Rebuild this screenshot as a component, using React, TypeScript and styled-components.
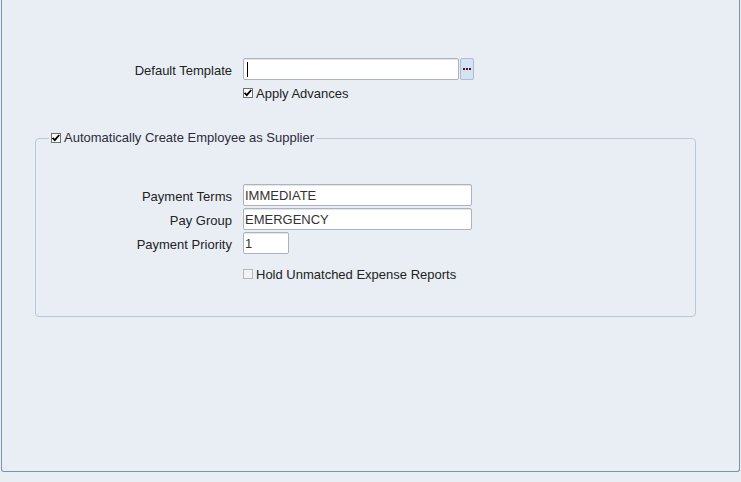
import React from 'react';
import styled, { createGlobalStyle } from 'styled-components';

const GlobalStyle = createGlobalStyle`
    html, body {
        margin: 0;
        padding: 0;
        background: #e9eef5;
        font-family: 'Liberation Sans', Arial, sans-serif;
    }
`;

export default function App() {
    return (
        <>
            <GlobalStyle />
            <PanelDiv>
                <FormGrid labelWidth={230}>
                    <Label>Default Template</Label>
                    <LovField>
                        <TextInput width={216}>
                            <Caret />
                        </TextInput>
                        <LovButton title="Search">
                            <svg width="8" height="2" viewBox="0 0 8 2">
                                <rect x="0" y="0" width="2" height="2" fill="#5c0f12" />
                                <rect x="3" y="0" width="2" height="2" fill="#5c0f12" />
                                <rect x="6" y="0" width="2" height="2" fill="#5c0f12" />
                            </svg>
                        </LovButton>
                    </LovField>
                    <span />
                    <CheckRow>
                        <CheckBox checked />
                        Apply Advances
                    </CheckRow>
                </FormGrid>

                <Group>
                    <Legend>
                        <CheckBox checked />
                        Automatically Create Employee as Supplier
                    </Legend>

                    <FormGrid labelWidth={196}>
                        <Label>Payment Terms</Label>
                        <TextInput width={229}>IMMEDIATE</TextInput>
                        <Label>Pay Group</Label>
                        <TextInput width={229}>EMERGENCY</TextInput>
                        <Label>Payment Priority</Label>
                        <TextInput width={46}>1</TextInput>
                        <span />
                        <CheckRow spaced>
                            <CheckBox disabled />
                            Hold Unmatched Expense Reports
                        </CheckRow>
                    </FormGrid>
                </Group>
            </PanelDiv>
        </>
    );
}

function CheckBox({ checked, disabled }: { checked?: boolean; disabled?: boolean }) {
    return (
        <CheckBoxSpan disabled={disabled}>
            {checked && (
                <svg width="8" height="8" viewBox="0 0 8 8">
                    <path d="M0.6 3.8 L2.8 6.2 L7.2 1" fill="none" stroke="#000" strokeWidth="1.8" />
                </svg>
            )}
        </CheckBoxSpan>
    );
}

const PanelDiv = styled.div`
    box-sizing: border-box;
    width: 739px;
    height: 472px;
    margin-left: 1px;
    padding: 58px 0 0 0;
    border: 1px solid #7d92ab;
    border-top: none;
    border-radius: 0 0 3px 3px;
    background: #e9eef5;
`;

const FormGrid = styled.div<{ labelWidth: number }>`
    display: grid;
    grid-template-columns: ${(p) => p.labelWidth}px 1fr;
    column-gap: 11px;
    row-gap: 2px;
    align-items: center;
`;

const Label = styled.label`
    box-sizing: border-box;
    height: 22px;
    padding-top: 2px;
    text-align: right;
    font-size: 13px;
    color: #222;
    line-height: 22px;
    white-space: nowrap;
`;

const TextInput = styled.div<{ width: number }>`
    box-sizing: border-box;
    display: flex;
    align-items: center;
    width: ${(p) => p.width}px;
    height: 22px;
    padding: 0 1px;
    border: 1px solid #aab3bf;
    border-radius: 2px;
    background: #fff;
    box-shadow: inset 0 1px 0 #e3e7ec;
    font-size: 13px;
    color: #333;
    white-space: nowrap;
`;

const Caret = styled.span`
    display: block;
    width: 1px;
    height: 15px;
    margin-left: 2px;
    background: #000;
`;

const LovField = styled.div`
    display: flex;
    gap: 1px;
`;

const LovButton = styled.div`
    box-sizing: border-box;
    display: flex;
    align-items: center;
    justify-content: center;
    width: 14px;
    height: 22px;
    border: 1px solid #a9bdd5;
    border-radius: 2px;
    background: #d5e2f1;
`;

const CheckRow = styled.div<{ spaced?: boolean }>`
    display: flex;
    align-items: center;
    gap: 3px;
    height: 18px;
    margin-top: ${(p) => (p.spaced ? 9 : 2)}px;
    font-size: 13px;
    color: #222;
    white-space: nowrap;
`;

const CheckBoxSpan = styled.span<{ disabled?: boolean }>`
    box-sizing: border-box;
    display: inline-flex;
    align-items: center;
    justify-content: center;
    width: 10px;
    height: 10px;
    border: 1px solid ${(p) => (p.disabled ? '#b4b8bd' : '#6f6f6f')};
    background: ${(p) => (p.disabled ? '#f1f2f4' : '#fff')};
`;

const Group = styled.fieldset`
    box-sizing: border-box;
    width: 661px;
    height: 187px;
    margin: 28px 0 0 33px;
    padding: 38px 0 0 0;
    border: 1px solid #b9c8da;
    border-radius: 4px;
`;

const Legend = styled.legend`
    display: flex;
    align-items: center;
    gap: 3px;
    margin-left: 13px;
    padding: 0 2px 0 2px;
    font-size: 13px;
    line-height: 16px;
    color: #2e2a3a;
    white-space: nowrap;
`;
